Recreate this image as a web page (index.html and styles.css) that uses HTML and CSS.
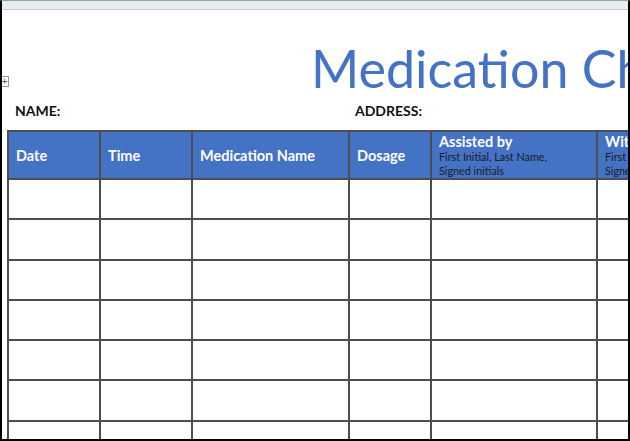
FILE: index.html
```html
<!DOCTYPE html>
<html>
<head>
<meta charset="utf-8">
<link rel="stylesheet" href="styles.css">
</head>
<body>
<div class="frame">
  <div class="topbar"></div>
  <div class="page">
    <div class="handle"><span class="handle-arrow">+</span></div>
    <h1 class="title">Medication Chart</h1>
    <div class="fields">
      <div class="field field-name">NAME:</div>
      <div class="field field-address">ADDRESS:</div>
    </div>
    <table class="chart">
      <colgroup>
        <col class="c1"><col class="c2"><col class="c3"><col class="c4"><col class="c5"><col class="c6">
      </colgroup>
      <thead>
        <tr>
          <th>Date</th>
          <th>Time</th>
          <th>Medication Name</th>
          <th>Dosage</th>
          <th class="stack"><span class="big">Assisted by</span><span class="small">First Initial, Last Name,<br>Signed initials</span></th>
          <th class="stack"><span class="big">Witnessed by</span><span class="small">First Initial, Last Name,<br>Signed initials</span></th>
        </tr>
      </thead>
      <tbody>
        <tr><td></td><td></td><td></td><td></td><td></td><td></td></tr>
        <tr><td></td><td></td><td></td><td></td><td></td><td></td></tr>
        <tr><td></td><td></td><td></td><td></td><td></td><td></td></tr>
        <tr><td></td><td></td><td></td><td></td><td></td><td></td></tr>
        <tr><td></td><td></td><td></td><td></td><td></td><td></td></tr>
        <tr><td></td><td></td><td></td><td></td><td></td><td></td></tr>
        <tr><td></td><td></td><td></td><td></td><td></td><td></td></tr>
      </tbody>
    </table>
  </div>
</div>
</body>
</html>
```
FILE: styles.css
```css
* { box-sizing: border-box; }
html, body { margin: 0; padding: 0; background: #fff; }
.frame {
  width: 630px;
  height: 441px;
  border-left: 2px solid #000;
  border-right: 2px solid #000;
  border-bottom: 2px solid #000;
  border-top: 1px solid #9a9ea0;
  overflow: hidden;
  position: relative;
  background: #fff;
}
.topbar {
  height: 9px;
  background: #e7eef0;
  border-bottom: 1px solid #c9cdcf;
}
.page {
  position: relative;
  padding-left: 5px;
}
.handle {
  position: absolute;
  left: -2px;
  top: 66px;
  width: 9px;
  height: 11px;
  border: 1px solid #9a9a9a;
  background: #fff;
  font: 8px/9px "DejaVu Sans", sans-serif;
  color: #444;
  text-align: center;
}
.title {
  margin: 0;
  padding: 29px 0 0 304px;
  height: 88px;
  font-family: "Lato", "Open Sans", sans-serif;
  font-weight: 400;
  font-size: 52px;
  word-spacing: 0;
  line-height: 58px;
  color: #4472c4;
  white-space: nowrap;
}
.fields {
  display: flex;
  height: 32px;
  padding-top: 4px;
  font-family: "Lato", sans-serif;
  font-weight: 700;
  font-size: 14px;
  color: #111;
}
.field-name { padding-left: 8px; width: 348px; }
.chart {
  border-collapse: collapse;
  table-layout: fixed;
  width: 760px;
  font-family: "Lato", sans-serif;
}
.c1 { width: 92px; }
.c2 { width: 92px; }
.c3 { width: 157px; }
.c4 { width: 82px; }
.c5 { width: 166px; }
.c6 { width: 171px; }
.chart th, .chart td {
  border: 2px solid #4d4d4d;
}
.chart th {
  background: #4472c4;
  color: #fff;
  font-weight: 700;
  font-size: 14.5px;
  text-align: left;
  vertical-align: middle;
  height: 48px;
  padding: 0 7px;
  white-space: nowrap;
}
.chart th.stack { vertical-align: top; padding-top: 1px; }
.big { display: block; font-size: 14.5px; line-height: 17px; }
.small {
  display: block;
  font-size: 10.8px;
  font-weight: 400;
  line-height: 14px;
  color: #1a1a2a;
}
.chart td { height: 40.3px; }
```
